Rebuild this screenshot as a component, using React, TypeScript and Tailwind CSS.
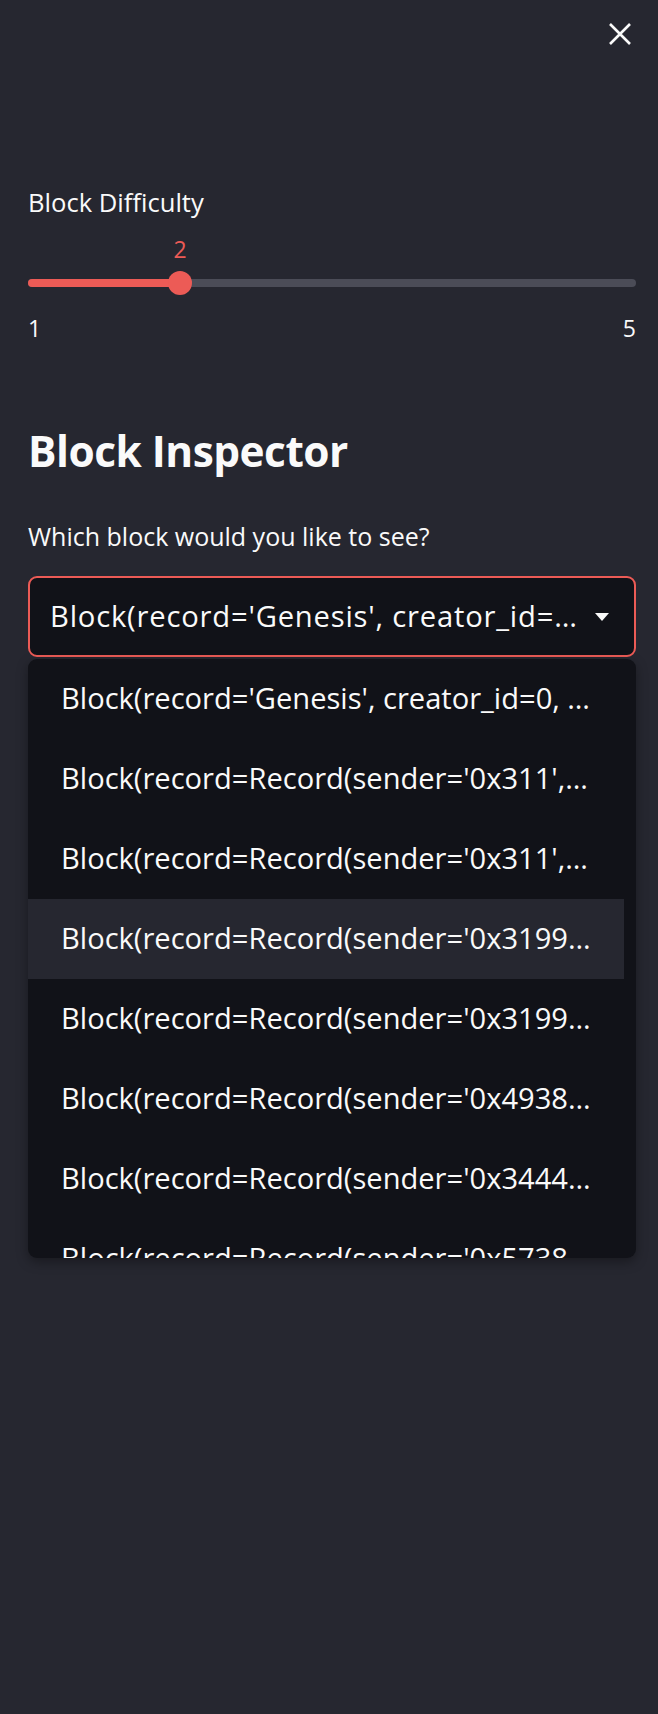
const options = [
  "Block(record='Genesis', creator_id=0, …",
  "Block(record=Record(sender='0x311',…",
  "Block(record=Record(sender='0x311',…",
  "Block(record=Record(sender='0x3199…",
  "Block(record=Record(sender='0x3199…",
  "Block(record=Record(sender='0x4938…",
  "Block(record=Record(sender='0x3444…",
  "Block(record=Record(sender='0x5738…",
]

function CloseIcon() {
  return (
    <svg width="24" height="24" viewBox="0 0 24 24" fill="none" stroke="#fafafa" strokeWidth="2.6">
      <path d="M2 2 22 22M22 2 2 22" />
    </svg>
  )
}

export default function App() {
  return (
    <div
      className="min-h-[1714px] bg-[#262730] text-[#fafafa]"
      style={{ fontFamily: "'Open Sans', 'Noto Sans', sans-serif" }}
    >
      <div className="flex justify-end pt-[22px] pr-[26px]">
        <button className="p-0">
          <CloseIcon />
        </button>
      </div>

      <div className="pl-[28px] pr-[22px]">
        {/* slider */}
        <div className="mt-[144px] text-[25.6px] leading-none">Block Difficulty</div>
        <div className="relative mt-[55px] h-[24px]">
          <div className="absolute top-1/2 left-0 right-0 h-[8px] -translate-y-1/2 rounded-full bg-[#4b4c57]">
            <div className="h-full w-1/4 rounded-full bg-[#ec5b56]" />
          </div>
          <div className="absolute top-0 left-1/4 h-[24px] w-[24px] -translate-x-1/2 rounded-full bg-[#ec5b56]" />
          <div className="absolute -top-[33px] left-1/4 -translate-x-1/2 text-[23px] leading-none text-[#ec5b56]">
            2
          </div>
        </div>
        <div className="mt-[22px] flex justify-between text-[23px] leading-none">
          <span>1</span>
          <span>5</span>
        </div>

        {/* inspector */}
        <h2 className="mt-[90px] text-[42.4px] font-bold leading-none tracking-[-0.5px]">Block Inspector</h2>
        <div className="mt-[52px] text-[25px] leading-none">Which block would you like to see?</div>

        <div className="mt-[27px] flex h-[81px] items-center justify-between rounded-[9px] border-2 border-[#ec5b56] bg-[#111218] pl-[20px] pr-[25px]">
          <span className="text-[29.2px] leading-none tracking-[0.8px]">Block(record='Genesis', creator_id=…</span>
          <svg width="14" height="8" viewBox="0 0 14 8" fill="#fafafa">
            <path d="M0 0h14L7 8z" />
          </svg>
        </div>

        <div className="mt-[2px] h-[599px] overflow-hidden rounded-[9px] bg-[#111218] shadow-[0_4px_12px_rgba(0,0,0,0.35)]">
          {options.map((o, i) => (
            <div
              key={i}
              className={`flex h-[80px] w-[596px] items-center pl-[33px] text-[29.1px] leading-none ${
                i === 3 ? "bg-[#262730]" : ""
              }`}
            >
              {o}
            </div>
          ))}
        </div>
      </div>
    </div>
  )
}
